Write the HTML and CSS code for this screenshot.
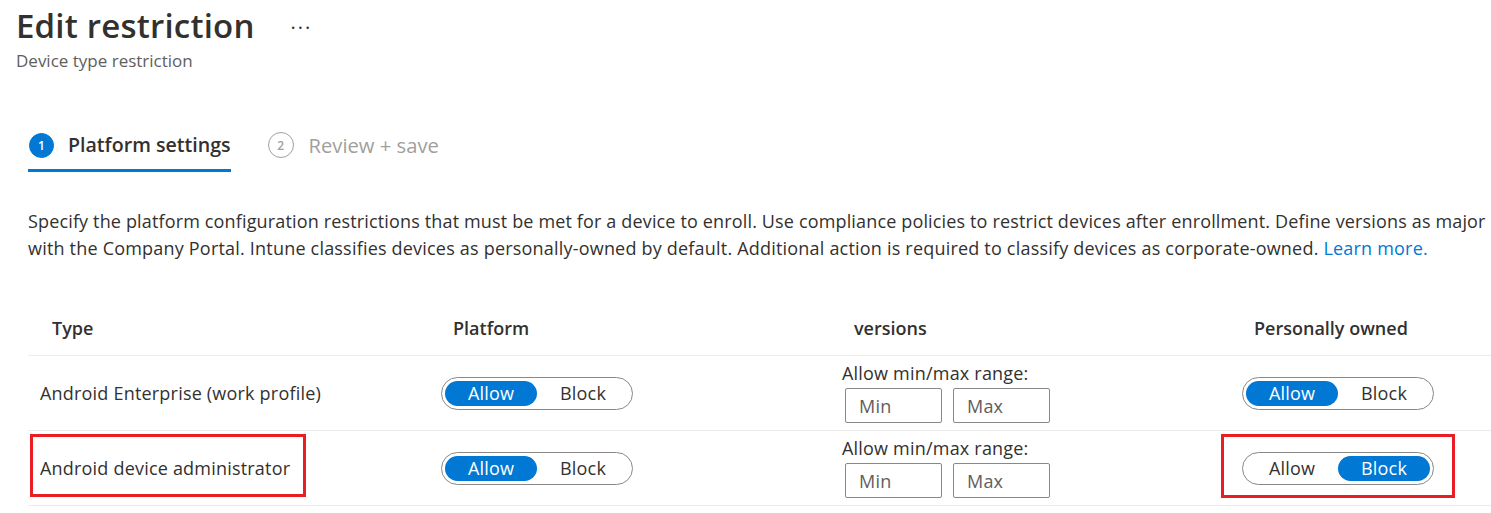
FILE: index.html
```html
<!DOCTYPE html>
<html>
<head>
<meta charset="utf-8">
<title>Edit restriction</title>
<link rel="stylesheet" href="styles.css">
</head>
<body>
	<div class="blade">
		<div class="blade-header">
			<div class="title-row">
				<h1 class="title">Edit restriction</h1>
				<span class="more">&middot;&middot;&middot;</span>
			</div>
			<div class="subtitle">Device type restriction</div>
		</div>

		<div class="blade-content">
			<div class="steps">
				<div class="step active">
					<span class="step-num">1</span>
					<span class="step-label">Platform settings</span>
				</div>
				<div class="step">
					<span class="step-num">2</span>
					<span class="step-label">Review + save</span>
				</div>
			</div>

			<p class="intro">
				<span class="intro-line first">Specify the platform configuration restrictions that must be met for a device to enroll. Use compliance policies to restrict devices after enrollment. Define versions as major</span>
				<span class="intro-line">with the Company Portal. Intune classifies devices as personally-owned by default. Additional action is required to classify devices as corporate-owned. <a class="link" href="#">Learn more.</a></span>
			</p>

			<div class="grid">
				<div class="cell head">Type</div>
				<div class="cell head">Platform</div>
				<div class="cell head">versions</div>
				<div class="cell head">Personally owned</div>

				<div class="cell">Android Enterprise (work profile)</div>
				<div class="cell">
					<div class="toggle">
						<span class="opt on">Allow</span>
						<span class="opt">Block</span>
					</div>
				</div>
				<div class="cell range">
					<div class="range-label">Allow min/max range:</div>
					<div class="range-inputs">
						<input class="field" type="text" placeholder="Min">
						<input class="field" type="text" placeholder="Max">
					</div>
				</div>
				<div class="cell">
					<div class="toggle">
						<span class="opt on">Allow</span>
						<span class="opt">Block</span>
					</div>
				</div>

				<div class="cell">
					Android device administrator
					<span class="callout callout-type"></span>
				</div>
				<div class="cell">
					<div class="toggle">
						<span class="opt on">Allow</span>
						<span class="opt">Block</span>
					</div>
				</div>
				<div class="cell range">
					<div class="range-label">Allow min/max range:</div>
					<div class="range-inputs">
						<input class="field" type="text" placeholder="Min">
						<input class="field" type="text" placeholder="Max">
					</div>
				</div>
				<div class="cell">
					<div class="toggle">
						<span class="opt">Allow</span>
						<span class="opt on">Block</span>
					</div>
					<span class="callout callout-owned"></span>
				</div>
			</div>
		</div>
	</div>
</body>
</html>
```

FILE: styles.css
```css
* {
	box-sizing: border-box;
}

html, body {
	margin: 0;
	padding: 0;
}

body {
	font-family: "Open Sans", "Noto Sans", sans-serif;
	color: #323130;
	background: #fff;
	overflow: hidden;
	width: 1491px;
	height: 513px;
}

.blade {
	width: 1491px;
	overflow: hidden;
}

/* header */
.blade-header {
	padding: 4px 0 0 16px;
}

.title-row {
	display: flex;
	align-items: center;
}

.title {
	margin: 0;
	font-size: 33px;
	line-height: 44px;
	font-weight: 600;
	letter-spacing: 0.2px;
	color: #323130;
}

.more {
	margin-left: 36px;
	margin-top: 4px;
	font-size: 20px;
	line-height: 20px;
	letter-spacing: 2px;
	color: #323130;
}

.subtitle {
	font-size: 17px;
	line-height: 26px;
	color: #605e5c;
}

/* content */
.blade-content {
	padding: 56px 0 0 28px;
}

.steps {
	display: flex;
	gap: 36px;
}

.step {
	display: flex;
	align-items: center;
	gap: 15px;
	padding: 0 0 9px 1px;
	border-bottom: 3px solid transparent;
	color: #a19f9d;
}

.step.active {
	gap: 14px;
	border-bottom-color: #0078d4;
	color: #323130;
}

.step-num {
	width: 26px;
	height: 26px;
	border-radius: 50%;
	border: 1.5px solid #a19f9d;
	display: flex;
	align-items: center;
	justify-content: center;
	font-size: 12px;
	font-weight: 600;
	color: #a19f9d;
}

.step.active .step-num {
	width: 25px;
	height: 25px;
	background: #0078d4;
	border-color: #0078d4;
	color: #fff;
}

.step-label {
	font-size: 20.2px;
	line-height: 30px;
}

.step.active .step-label {
	font-size: 19.6px;
	font-weight: 600;
}

.intro {
	margin: 36px 0 0;
	font-size: 18px;
	line-height: 27px;
	letter-spacing: 0.2px;
}

.intro-line {
	display: block;
	white-space: nowrap;
}

.intro-line.first {
	letter-spacing: 0.15px;
}

.link {
	color: #0078d4;
	text-decoration: none;
}

/* table */
.grid {
	display: grid;
	grid-template-columns: 401px 401px 400px 400px;
	margin-top: 46px;
	font-size: 18px;
	letter-spacing: 0.2px;
}

.cell {
	position: relative;
	display: flex;
	align-items: center;
	height: 75px;
	padding-left: 12px;
	border-bottom: 1px solid #edebe9;
}

.cell.head {
	align-items: flex-end;
	height: 48px;
	padding: 0 0 16px 24px;
	line-height: 22px;
	font-weight: 600;
	letter-spacing: 0;
}

.cell.range {
	flex-direction: column;
	align-items: flex-start;
	padding-top: 6px;
}

.range-label {
	line-height: 22px;
}

.range-inputs {
	display: flex;
	gap: 11px;
	margin: 4px 0 0 3px;
}

.field {
	width: 97px;
	height: 35px;
	border: 1px solid #8a8886;
	border-radius: 2px;
	padding: 0 13px;
	font-family: inherit;
	font-size: 18px;
	letter-spacing: 0.2px;
	color: #323130;
}

.field::placeholder {
	color: #605e5c;
}

.toggle {
	display: flex;
	height: 33px;
	padding: 3px;
	border: 1px solid #8a8886;
	border-radius: 17px;
}

.opt {
	width: 92px;
	display: flex;
	align-items: center;
	justify-content: center;
	border-radius: 14px;
	font-size: 18px;
	color: #323130;
}

.opt.on {
	background: #0078d4;
	color: #fff;
}

/* red annotation boxes */
.callout {
	position: absolute;
	border: 3px solid #ea1c24;
	pointer-events: none;
}

.callout-type {
	left: 2px;
	top: 3px;
	width: 276px;
	height: 63px;
}

.callout-owned {
	left: -9px;
	top: 3px;
	width: 234px;
	height: 64px;
}
```
